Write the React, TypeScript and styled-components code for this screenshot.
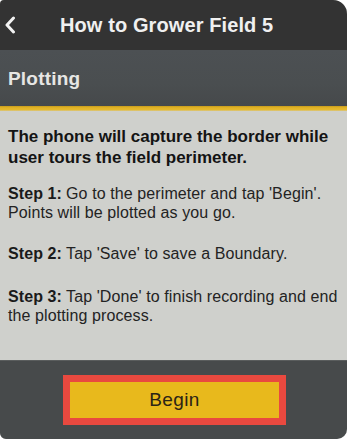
import styled, { createGlobalStyle } from 'styled-components';

const GlobalStyle = createGlobalStyle`
  html, body {
    margin: 0;
    padding: 0;
    background: #ffffff;
  }
  * {
    box-sizing: border-box;
  }
`;

const Screen = styled.div`
  width: 347px;
  height: 439px;
  display: flex;
  flex-direction: column;
  overflow: hidden;
  border-radius: 4px 14px 10px 6px;
  font-family: 'Liberation Sans', Arial, sans-serif;
  background: #cfd0cc;
`;

const NavBar = styled.div`
  height: 50px;
  flex: none;
  display: flex;
  align-items: center;
  background: #333333;
  padding-left: 4px;
`;

const BackButton = styled.button`
  width: 14px;
  height: 20px;
  padding: 0;
  border: none;
  background: none;
  display: flex;
  align-items: center;
  cursor: pointer;
`;

const NavTitle = styled.h1`
  margin: 0 0 0 42px;
  font-size: 20px;
  font-weight: 700;
  color: #f0f0f0;
  letter-spacing: 0.1px;
`;

const SectionBar = styled.div`
  height: 56px;
  flex: none;
  display: flex;
  align-items: center;
  padding: 2px 8px 0;
  background: linear-gradient(180deg, #4c5053 0%, #4a4e50 60%, #46494b 100%);
`;

const SectionTitle = styled.h2`
  margin: 0;
  font-size: 19px;
  font-weight: 700;
  color: #e6e6e4;
  letter-spacing: 0.2px;
`;

const Accent = styled.div`
  height: 5px;
  flex: none;
  background: linear-gradient(180deg, #c79b1c 0%, #e2b326 35%, #e6b92e 75%, #d8c98e 100%);
`;

const Content = styled.div`
  flex: 1;
  padding: 15px 3px 0 8px;
  background: #cfd0cc;
`;

const Lead = styled.p`
  margin: 0 0 16px;
  font-size: 17px;
  line-height: 21px;
  font-weight: 700;
  color: #141414;
`;

const StepText = styled.p<{ $gap: number }>`
  margin: 0 0 ${({ $gap }) => $gap}px;
  font-size: 16px;
  line-height: 19px;
  color: #232323;
  letter-spacing: 0.1px;
`;

const StepLabel = styled.strong`
  font-weight: 700;
  color: #1a1a1a;
  margin-right: 4px;
`;

const Footer = styled.div`
  height: 79px;
  flex: none;
  display: flex;
  align-items: flex-start;
  justify-content: center;
  padding-top: 14px;
  background: #474a4b;
  border-top: 1px solid #5a5d5d;
`;

const BeginButton = styled.button`
  width: 223px;
  height: 50px;
  margin-left: 2px;
  border: 7px solid #e9493f;
  background: #e8b91c;
  font-family: 'Liberation Sans', Arial, sans-serif;
  font-size: 19px;
  letter-spacing: 0.4px;
  color: #2b2416;
  cursor: pointer;
`;

const steps = [
  { label: 'Step 1:', text: "Go to the perimeter and tap 'Begin'. Points will be plotted as you go.", gap: 22 },
  { label: 'Step 2:', text: "Tap 'Save' to save a Boundary.", gap: 24 },
  { label: 'Step 3:', text: "Tap 'Done' to finish recording and end the plotting process.", gap: 0 },
];

export default function App() {
  return (
    <>
      <GlobalStyle />
      <Screen>
        <NavBar>
          <BackButton aria-label="Back">
            <svg width="12" height="18" viewBox="0 0 12 18">
              <path d="M9.5 2 L3 9 L9.5 16" fill="none" stroke="#f2f2f2" strokeWidth="3" strokeLinecap="round" strokeLinejoin="round" />
            </svg>
          </BackButton>
          <NavTitle>How to Grower Field 5</NavTitle>
        </NavBar>
        <SectionBar>
          <SectionTitle>Plotting</SectionTitle>
        </SectionBar>
        <Accent />
        <Content>
          <Lead>The phone will capture the border while user tours the field perimeter.</Lead>
          {steps.map((s) => (
            <StepText key={s.label} $gap={s.gap}>
              <StepLabel>{s.label}</StepLabel>
              {s.text}
            </StepText>
          ))}
        </Content>
        <Footer>
          <BeginButton>Begin</BeginButton>
        </Footer>
      </Screen>
    </>
  );
}
